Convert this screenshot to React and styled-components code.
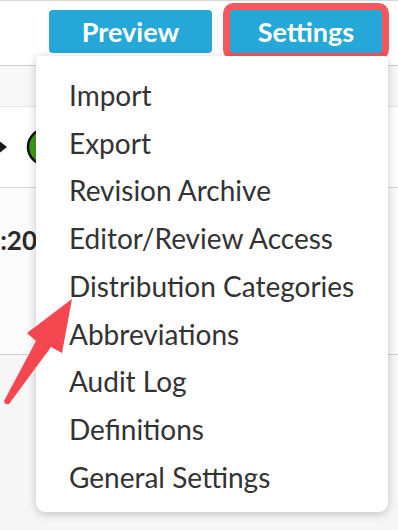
import React from 'react';
import styled, { createGlobalStyle } from 'styled-components';

const GlobalStyle = createGlobalStyle`
  html, body {
    margin: 0;
    padding: 0;
    background: #ffffff;
  }
  body {
    font-family: Lato, "Open Sans", "Liberation Sans", sans-serif;
  }
`;

const Screen = styled.div`
  position: relative;
  width: 398px;
  height: 530px;
  overflow: hidden;
  background: #f7f7f7;
`;

const TopBar = styled.div`
  height: 66px;
  box-sizing: border-box;
  border-top: 1px solid #d6d6d6;
  border-bottom: 1px solid #cfcfcf;
  background: #ffffff;
  display: flex;
  justify-content: flex-end;
  align-items: flex-start;
  gap: 18px;
  padding: 9px 16px 0 0;
`;

const ActionButton = styled.button`
  width: ${props => props.$width}px;
  height: 43px;
  border: none;
  border-radius: 4px;
  background: #25a8d8;
  color: #ffffff;
  font-family: Lato, "Open Sans", sans-serif;
  font-size: 27px;
  font-weight: 700;
  padding: 0;
  box-shadow: ${props => props.$highlight ? '0 0 0 7px #f4585d' : 'none'};
`;

const Table = styled.div`
  display: flex;
  flex-direction: column;
`;

const Row = styled.div`
  height: ${props => props.$height}px;
  box-sizing: border-box;
  border-bottom: 1px solid ${props => props.$line};
  background: ${props => props.$bg};
  display: flex;
  align-items: center;
`;

const Cell = styled.div`
  width: 36px;
  height: 100%;
  position: relative;
  display: flex;
  align-items: center;
  justify-content: flex-end;
  overflow: hidden;
`;

const Time = styled.span`
  font-size: 26px;
  font-weight: 700;
  color: #2b2b2b;
  margin-top: -62px;
  margin-right: -1px;
  white-space: nowrap;
`;

const StatusMark = styled.svg`
  position: absolute;
  left: 0;
  top: 50%;
  transform: translateY(-50%);
`;

const Menu = styled.div`
  position: absolute;
  left: 36px;
  top: 56px;
  width: 352px;
  height: 456px;
  box-sizing: border-box;
  background: #ffffff;
  border-radius: 4px 4px 9px 9px;
  box-shadow: 0 2px 10px rgba(0, 0, 0, 0.22);
  padding: 16px 0 0 33px;
  display: flex;
  flex-direction: column;
`;

const MenuItem = styled.div`
  font-size: 28px;
  line-height: 47.7px;
  color: #333333;
  white-space: nowrap;
`;

const Arrow = styled.svg`
  position: absolute;
  left: 0;
  top: 290px;
`;

const items = [
  'Import',
  'Export',
  'Revision Archive',
  'Editor/Review Access',
  'Distribution Categories',
  'Abbreviations',
  'Audit Log',
  'Definitions',
  'General Settings',
];

export default function App() {
  return (
    <Screen>
      <GlobalStyle />
      <TopBar>
        <ActionButton $width={163}>Preview</ActionButton>
        <ActionButton $width={152} $highlight>Settings</ActionButton>
      </TopBar>
      <Table>
        <Row $height={41} $bg="#f8f8f8" $line="#e6e6e6" />
        <Row $height={81} $bg="#ffffff" $line="#d4d4d4">
          <Cell>
            <StatusMark width="36" height="40" viewBox="0 0 36 40">
              <path d="M-2 13 L7 20 L-2 27 Z" fill="#1a1a1a" />
              <circle cx="46" cy="20" r="18" fill="#3f9b17" stroke="#111" strokeWidth="2.5" />
            </StatusMark>
          </Cell>
        </Row>
        <Row $height={167} $bg="#fbfbfb" $line="#cfcfcf">
          <Cell>
            <Time>:20</Time>
          </Cell>
        </Row>
        <Row $height={175} $bg="#f6f6f6" $line="transparent" />
      </Table>
      <Menu>
        {items.map(item => (
          <MenuItem key={item}>{item}</MenuItem>
        ))}
      </Menu>
      <Arrow width="80" height="120" viewBox="0 290 80 120">
        <path
          d="M72 299 L62 353 L51 347 L9 404 Q5 405 4 401 L36 341 L27 333 Z"
          fill="#f4474f"
        />
      </Arrow>
    </Screen>
  );
}
